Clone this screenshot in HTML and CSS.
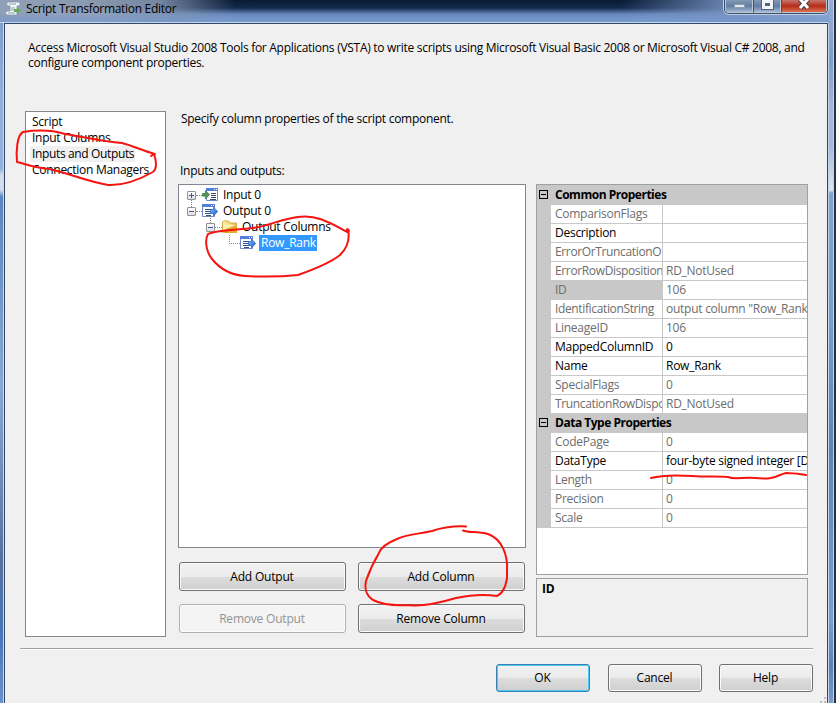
FILE: index.html
```html
<!DOCTYPE html>
<html lang="en">
<head>
<meta charset="utf-8">
<title>Script Transformation Editor</title>
<link rel="stylesheet" href="styles.css">
</head>
<body>
<svg class="defs" width="0" height="0">
  <defs>
    <linearGradient id="arrowBlue" x1="0" y1="0" x2="1" y2="1"><stop offset="0" stop-color="#8cc4ff"/><stop offset="1" stop-color="#1256bd"/></linearGradient>
    <linearGradient id="folder" x1="0" y1="0" x2="1" y2="1"><stop offset="0" stop-color="#fff3b0"/><stop offset="1" stop-color="#dda322"/></linearGradient>
    <symbol id="icon-output" viewBox="0 0 16 16">
      <path d="M.5 1.500h12v12H.5z" fill="#fff" stroke="#7189c4"/><path d="M0 1h13v3H0z" fill="#547ddc"/><path d="M9 2h1v1H9zM11 2h1v1h-1z" fill="#fff"/>
      <path d="M3 6.500h6M3 8.500h5M3 10.500h6M4 12.500h5" stroke="#344e85"/>
      <path d="M8.500 6.500h3V4.200l4.200 4.300-4.200 4.300v-2.300h-3z" fill="url(#arrowBlue)" stroke="#2469c2" stroke-width=".8"/>
    </symbol>
    <symbol id="icon-input" viewBox="0 0 16 16">
      <path d="M4.500 1.500h11v12h-11z" fill="#fff" stroke="#7189c4"/><path d="M4 1h12v3H4z" fill="#547ddc"/><path d="M12 2h1v1h-1zM14 2h1v1h-1z" fill="#fff"/>
      <path d="M9 6.500h5M9 8.500h5M9 10.500h5M8 12.500h6" stroke="#414b60"/>
      <path d="M.4 6.500h3V3.700l4.200 4-4.200 4v-2.600h-3z" fill="#4c9c51" stroke="#2b713a" stroke-width=".7"/>
    </symbol>
  </defs>
</svg>
<div class="window">
  <header class="titlebar">
    <svg class="app-icon" viewBox="0 0 16 16"><path d="M4 1h9c3 0 2.500 4 0 4h-1v9H3c-3 0-3-4 0-4h2V5H4C1 5 1 1 4 1z" fill="#f1f5f9" stroke="#8496aa" stroke-width=".8"/><path d="M4 3h7M6 7h4M6 9h4M3 12h7" stroke="#8da0b2"/><path d="M9 8h3V6l4 3.500-4 3.500v-2H9z" fill="#68a756"/></svg>
    <h1 class="title">Script Transformation Editor</h1>
    <div class="caption">
      <span class="cap min"><i></i></span>
      <span class="cap max"><i></i></span>
      <span class="cap close"><svg width="14" height="12" viewBox="0 0 14 12"><path d="M3 1l8 9M11 1L3 10" stroke="#4d3d4a" stroke-width="5"/><path d="M3 1l8 9M11 1L3 10" stroke="#fff" stroke-width="3"/></svg></span>
    </div>
  </header>
  <main class="client">
    <p class="intro"><span class="line">Access Microsoft Visual Studio 2008 Tools for Applications (VSTA) to write scripts using Microsoft Visual Basic 2008 or Microsoft Visual C# 2008, and</span><span class="line">configure component properties.</span></p>
    <div class="panes">
      <ul class="pages">
        <li>Script</li><li>Input Columns</li><li><span class="current">Inputs and Outputs</span></li><li>Connection Managers</li>
      </ul>
      <section class="middle">
        <p class="hint">Specify column properties of the script component.</p>
        <p class="label">Inputs and outputs:</p>
        <div class="tree">
          <div class="node n1"><span class="toggle plus"></span><span class="dots"></span><svg class="icon"><use href="#icon-input"/></svg><span class="name">Input 0</span></div>
          <div class="node n1"><span class="toggle up"></span><span class="dots"></span><svg class="icon"><use href="#icon-output"/></svg><span class="name">Output 0</span></div>
          <div class="node n2"><span class="toggle up"></span><span class="dots"></span><svg class="icon" viewBox="0 0 16 16"><path d="M.5 3.500l1-1.500h5l1.500 2h6.500v9.500H.5z" fill="url(#folder)" stroke="#d5a442"/><path d="M1 13l3-4 11-2v7H1z" fill="#e4ac2f"/><path d="M1 5l12 1-9 4-3 4z" fill="#fff0ac"/></svg><span class="name">Output Columns</span></div>
          <div class="node n3"><span class="elbow"></span><svg class="icon"><use href="#icon-output"/></svg><span class="name selected">Row_Rank</span></div>
        </div>
        <div class="actions">
          <button>Add Output</button><button>Add Column</button>
          <button disabled>Remove Output</button><button>Remove Column</button>
        </div>
      </section>
      <section class="properties">
        <div class="grid">
          <div class="category"><span class="collapse"></span>Common Properties</div>
          <div class="row"><span>ComparisonFlags</span><span></span></div>
          <div class="row editable"><span>Description</span><span></span></div>
          <div class="row"><span class="tight">ErrorOrTruncationO</span><span></span></div>
          <div class="row"><span class="tight">ErrorRowDisposition</span><span>RD_NotUsed</span></div>
          <div class="row active"><span>ID</span><span>106</span></div>
          <div class="row"><span class="tight">IdentificationString</span><span>output column "Row_Rank"</span></div>
          <div class="row"><span>LineageID</span><span>106</span></div>
          <div class="row editable"><span>MappedColumnID</span><span>0</span></div>
          <div class="row editable"><span>Name</span><span>Row_Rank</span></div>
          <div class="row"><span>SpecialFlags</span><span>0</span></div>
          <div class="row"><span class="tight">TruncationRowDisposition</span><span>RD_NotUsed</span></div>
          <div class="category"><span class="collapse"></span>Data Type Properties</div>
          <div class="row"><span>CodePage</span><span>0</span></div>
          <div class="row editable"><span>DataType</span><span>four-byte signed integer [DT_I4]</span></div>
          <div class="row"><span>Length</span><span>0</span></div>
          <div class="row"><span>Precision</span><span>0</span></div>
          <div class="row"><span>Scale</span><span>0</span></div>
        </div>
        <div class="description">ID</div>
      </section>
    </div>
    <footer class="footer"><button class="default">OK</button><button>Cancel</button><button>Help</button></footer>
    <svg class="grip" width="6" height="6"><path d="M4 0h2v2H4zM0 4h2v2H0zM4 4h2v2H4z" fill="#bbb"/></svg>
  </main>
</div>
<svg class="ink" width="836" height="703" viewBox="0 0 836 703">
  <path d="M155 154C143 151 134 146 122 143C101 141 84 137 65 134C52 130 36 130 23 132C17 135 16 151 17 162C26 164 32 167 42 168C65 171 81 180 108 185C126 186 144 177 153 172C158 168 156 160 154 154L151 156"/>
  <path d="M349 231C348 228 346 229 347 232C326 220 315 215 298 217C281 219 269 226 253 228C236 230 216 230 208 234C204 241 207 253 212 259C220 269 231 275 245 276C264 277 279 277 298 275C315 269 330 263 340 255C348 247 350 239 348 230"/>
  <path d="M466 526.500C456 526 444 527 432 531C419 534 408 534 397 539C387 543 381 547 379 553C373 563 369 572 366 581C364 591 367 596 373 600C383 605 394 606 409 605C421 607 439 603 456 598C470 595 485 594 497 596C505 592 508 580 507 571C508 555 502 539 488 534C477 531 469 533 463 530.500"/>
  <path d="M651 478C662 475 677 475 692 476C708 477 719 476 728 477C735 480 742 477 755 478C776 480 777 475 786 473C794 473 799 474 806 475"/>
</svg>
</body>
</html>
```

FILE: styles.css
```css
* { box-sizing: border-box; }
body { margin: 0; width: 836px; height: 703px; overflow: hidden; color: #000; font: 12px/16px "Open Sans", "Noto Sans", sans-serif; letter-spacing: -.28px; }
p, ul, h1 { margin: 0; padding: 0; font: inherit; }
ul { list-style: none; }
.defs, .ink, .grip { position: absolute; }
.window {
  height: 703px; padding: 0 8px 0 4px; display: flex; flex-direction: column;
  background:
    linear-gradient(#c3d3e8, #c3d3e8) 828px 23px / 1px 680px no-repeat,
    linear-gradient(90deg, transparent 4px, #bed2ea 4px 5px, #26323f 5px) 829px 0 / 7px 703px no-repeat,
    linear-gradient(#98afd2, #7f9dcb 60px, #a3b8da 110px, #a3b8da 145px, #dce6f2 190px, #83a2cf 193px, #7c9ccb 320px, #6283b2 450px, #7395c7 560px, #7b9dd0 620px, #5e80b8 665px, #7a9bcb) 829px 0 / 4px 703px no-repeat,
    linear-gradient(90deg, transparent 3px, #c9d9ec 3px 4px) 0 23px / 4px 680px no-repeat,
    linear-gradient(#7698cc, #91add5 11%, #93b2db 24%, #d3e0ef 25%, #d0deee 27%, #5c86bf 28%, #89a9d2 55%, #56719d 80%, #4976b9 90%, #6b91ce);
}
.titlebar {
  flex: 0 0 23px; margin: 0 0 0 -4px; padding-left: 5px; display: flex; border-bottom: 1px solid #c4d8ef;
  background: linear-gradient(#0000 12px, #7596cb99 20px), linear-gradient(90deg, #8fa0b8 0, #98a7bce6 90px, #8597b2d9 160px, #5f7ca600 235px), linear-gradient(90deg, #7590bb00 75%, #7895c4 90%, #8eabd5), linear-gradient(#091a33, #152b4d 8px, #6284b7 14px, #7b9fd4);
}
.app-icon { width: 16px; height: 16px; margin-top: 1px; }
.title { padding: 1px 0 0 5px; letter-spacing: -.3px; }
.caption { width: 104px; height: 14px; margin-left: auto; display: flex; border: 1px solid #3d4e68; border-top: 0; border-radius: 0 0 5px 5px; box-shadow: 0 0 0 1px #bfd0e6; overflow: hidden; }
.cap { width: 28px; display: flex; justify-content: center; border: 1px solid #bbc8d9; border-top: 0; background: linear-gradient(#8499b3, #607da3 6px, #a3b9d4); }
.cap + .cap { border-left-color: #43536a; }
.cap.close { flex: 1; background: linear-gradient(#c7766b, #b32d19 6px, #da7351); }
.min i { width: 11px; height: 4px; margin-top: 4px; background: #e1e5ec; border: 1px solid #8d9caf; }
.max i { width: 11px; height: 9px; border: 3px solid #f4f5f8; outline: 1px solid #53627a; background: #53627a; }
.close svg { margin-top: -2px; }
.client { position: relative; flex: 1; min-height: 0; border: 1px solid #304767; border-bottom: 0; background: #f0f0f0; display: flex; flex-direction: column; }
.intro { padding: 16px 0 0 23px; height: 87px; line-height: 15px; white-space: nowrap; }
.line { display: block; }
.panes { display: grid; grid-template-columns: 141px 348px 272px; column-gap: 12px; height: 526px; padding-left: 20px; }
.pages { border: 1px solid #828790; background: #fff; padding: 2px 0 0 6px; white-space: nowrap; }
.pages li { height: 16px; }
.current { background: #f0f0f0; display: inline-block; width: 105px; margin-left: -2px; padding-left: 2px; letter-spacing: -.36px; }
.middle { display: flex; flex-direction: column; }
.hint { height: 52px; padding-left: 3px; }
.label { height: 21px; padding-left: 2px; }
.tree { height: 364px; border: 1px solid #828790; background: #fff; padding: 2px 0 0 8px; letter-spacing: -.26px; }
.node { height: 16px; display: flex; align-items: center; }
.n2 { padding-left: 19px; }
.n3 { padding-left: 42px; }
.toggle { position: relative; width: 9px; height: 9px; border: 1px solid #919191; border-radius: 1px; background: linear-gradient(90deg, #39599a, #39599a) center / 5px 1px no-repeat, linear-gradient(#fff, #dedede); }
.plus { background: linear-gradient(#39599a, #39599a) center / 5px 1px no-repeat, linear-gradient(#39599a, #39599a) center / 1px 5px no-repeat, linear-gradient(#fff, #dedede); }
.up::before { content: ""; position: absolute; left: 3px; top: -8px; height: 7px; border-left: 1px dotted #888; }
.dots { width: 6px; border-top: 1px dotted #888; }
.n2 .dots { width: 7px; }
.icon { width: 16px; height: 16px; flex: none; }
.name { margin-left: 3px; padding: 0 2px 0 1px; line-height: 16px; }
.n1 .name { margin-left: 4px; }
.elbow { width: 11px; height: 9px; margin-top: -7px; border: dotted #888; border-width: 0 0 1px 1px; }
.selected { background: #3399ff; color: #fff; width: 58px; padding-left: 2px; }
.actions { padding: 14px 1px 0; display: grid; grid-template-columns: 167px 167px; gap: 13px 12px; }
button { height: 29px; padding: 0 1px 0 0; border: 1px solid #707070; border-radius: 3px; box-shadow: inset 0 0 0 1px #fbfbfb; background: linear-gradient(#f2f2f2, #ebebeb 50%, #dddddd 50%, #cfcfcf); color: #000; font: inherit; letter-spacing: -.2px; }
button:disabled { border-color: #adb2b5; background: #f4f4f4; color: #939393; }
.properties { padding-top: 73px; margin-left: -2px; width: 272px; letter-spacing: -.26px; }
.grid { height: 391px; border: 1px solid #a0a0a0; background: #fff; padding-top: 1px; box-shadow: inset 0 1px #c8c8c8; }
.category { height: 19px; background: #c8c8c8; display: flex; align-items: flex-start; font-weight: 700; letter-spacing: -.48px; line-height: 17px; }
.collapse { width: 9px; height: 9px; margin: 4px 7px 0 2px; border: 1px solid #000; background: linear-gradient(#000, #000) center / 5px 1px no-repeat; }
.row { height: 19px; display: grid; grid-template-columns: 111px 1fr; padding-left: 14px; background: linear-gradient(90deg, #c8c8c8 14px, transparent 14px); color: #6d6d6d; line-height: 18px; }
.row span { overflow: hidden; white-space: nowrap; border-bottom: 1px solid #c8c8c8; padding-left: 4px; }
.row span + span { border-left: 1px solid #c8c8c8; padding-left: 3px; }
.row .tight { letter-spacing: -.36px; }
.editable { color: #000; }
.active span:first-child { background: #c8c8c8; }
.description { height: 59px; margin-top: 3px; border: 1px solid #a0a0a0; padding: 2px 5px; font-weight: 700; }
.footer { margin: 11px 14px 0 15px; border-top: 1px solid #a0a0a0; box-shadow: inset 0 1px #fff; padding-top: 15px; display: flex; justify-content: flex-end; }
.footer button { width: 94px; height: 28px; }
.footer button:nth-child(2) { margin: 0 17px 0 18px; }
.footer .default { border-color: #3c7fb1; box-shadow: inset 0 0 0 1px #4ccaf3; }
.grip { right: 1px; bottom: 0; }
.ink { left: 0; top: 0; pointer-events: none; fill: none; stroke: #f5140f; stroke-width: 2; stroke-linecap: round; stroke-linejoin: round; }
```
